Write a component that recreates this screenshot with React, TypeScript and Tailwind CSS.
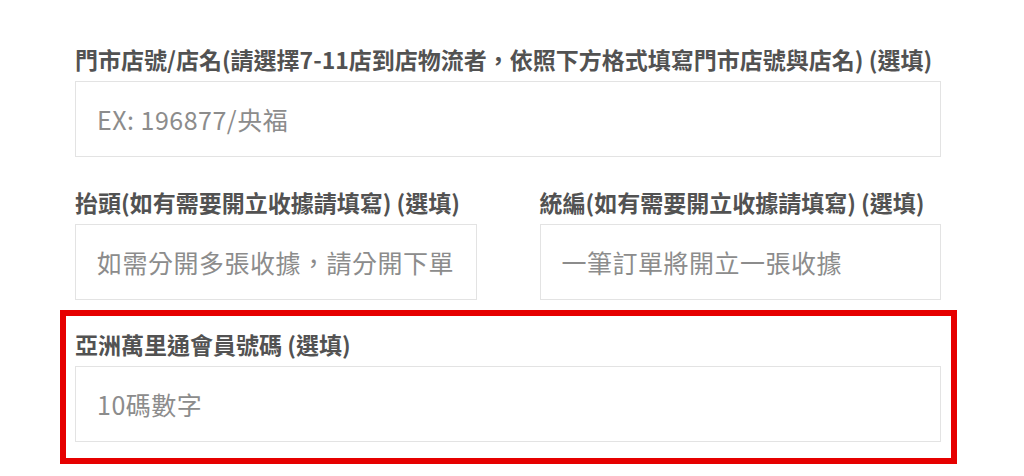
import React from 'react';

const FONT = "font-['Noto_Sans_CJK_TC','Noto_Sans',sans-serif]";

interface FieldProps {
  label: string;
  placeholder: string;
}

// -- Field: label above a plain bordered text box --
function Field({ label, placeholder }: FieldProps) {
  return (
    <div className="flex flex-col gap-[7px]">
      <label className="text-[23px] leading-[30px] font-bold text-[#525252] whitespace-nowrap">
        {label}
      </label>
      <input
        type="text"
        placeholder={placeholder}
        className="h-[76px] w-full border border-[#e3e3e3] bg-white px-[21px] text-[25px] text-[#444] outline-none placeholder:text-[#8c8c8c] tracking-[0.5px]"
      />
    </div>
  );
}

export default function App() {
  return (
    <div className={`w-[1024px] h-[476px] overflow-hidden bg-white ${FONT}`}>
      <div className="ml-[75px] w-[866px] pt-[44px]">
        <Field
          label="門市店號/店名(請選擇7-11店到店物流者，依照下方格式填寫門市店號與店名) (選填)"
          placeholder="EX: 196877/央福"
        />

        <div className="mt-[30px] grid grid-cols-2 gap-[63px]">
          <Field label="抬頭(如有需要開立收據請填寫) (選填)" placeholder="如需分開多張收據，請分開下單" />
          <Field label="統編(如有需要開立收據請填寫) (選填)" placeholder="一筆訂單將開立一張收據" />
        </div>

        {/* highlighted field */}
        <div className="mt-[10px] ml-[-15px] mr-[-16px] border-[6px] border-[#e60000] pl-[9px] pr-[10px] pt-[13px] pb-[16px]">
          <Field label="亞洲萬里通會員號碼 (選填)" placeholder="10碼數字" />
        </div>
      </div>
    </div>
  );
}
